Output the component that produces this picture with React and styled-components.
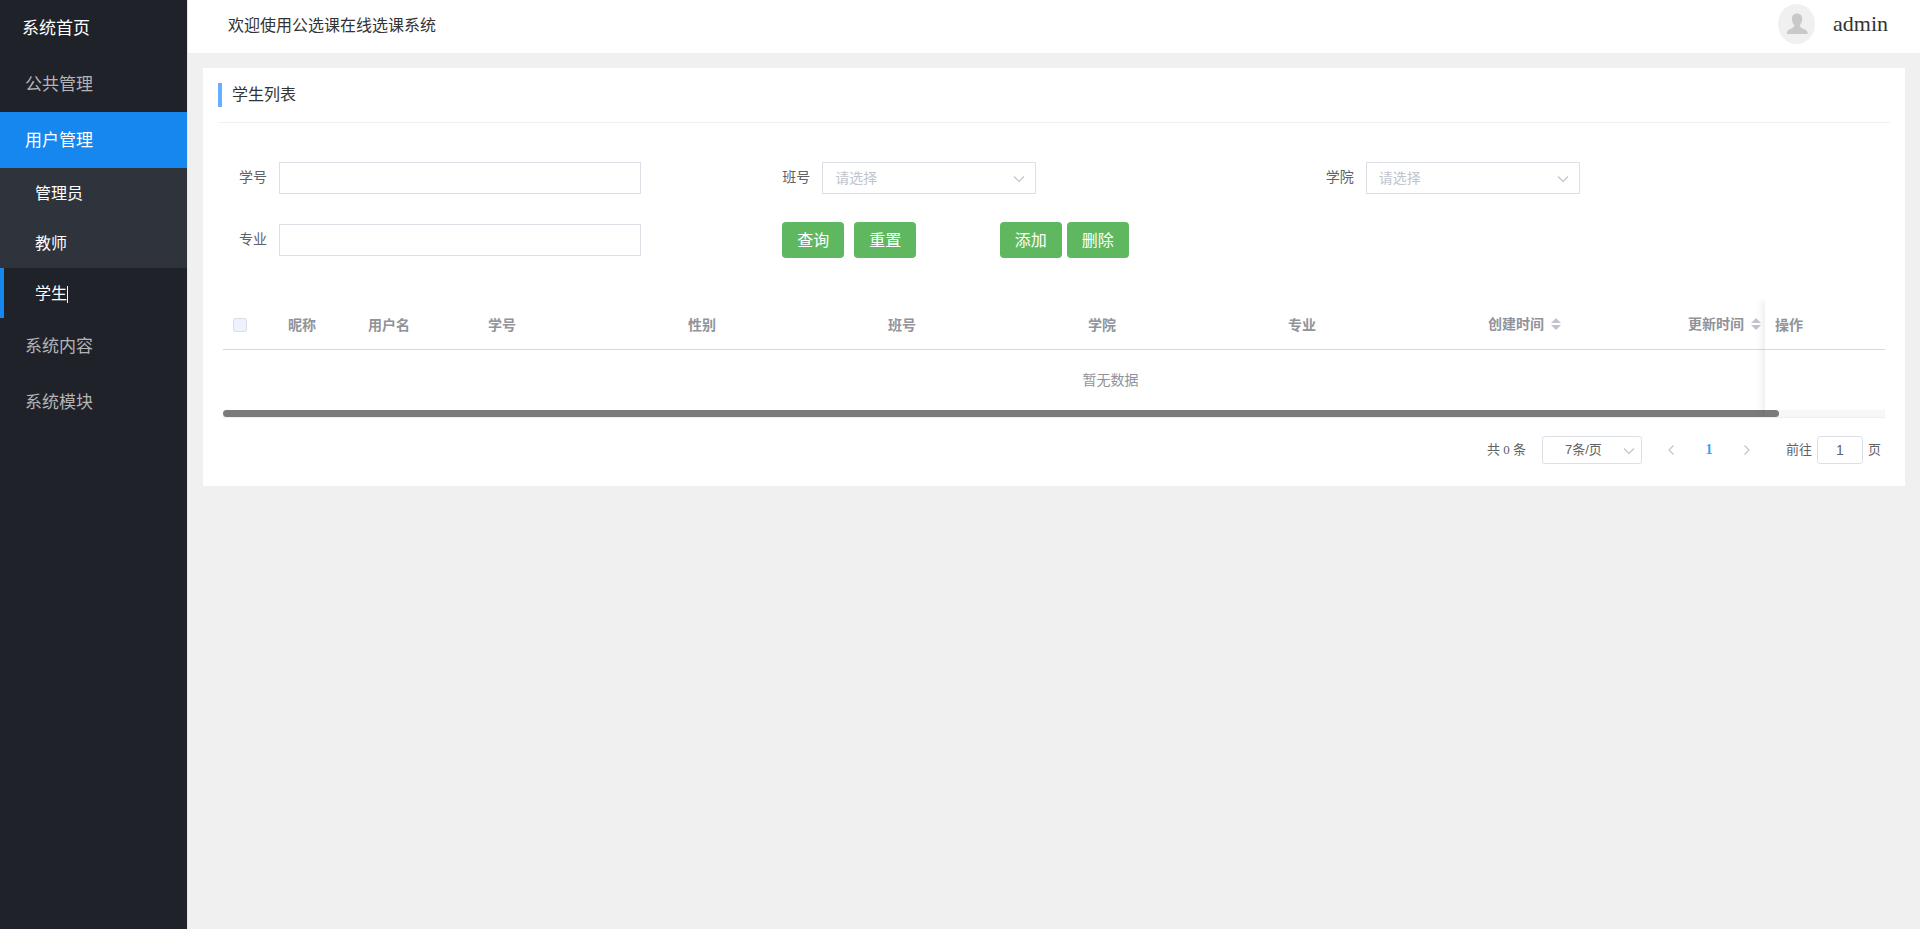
import React, { useState, useEffect, useRef } from 'react';
import styled, { createGlobalStyle, css } from 'styled-components';

const serif = '"Liberation Serif", "Noto Sans CJK SC", serif';
const sans = '"Liberation Sans", "Noto Sans CJK SC", sans-serif';

const GlobalStyle = createGlobalStyle`
  * {
    box-sizing: border-box;
  }
  body {
    margin: 0;
    background: #f0f0f0;
    color: #333;
    font-family: ${serif};
  }
  button, input, select {
    margin: 0;
    font-family: ${sans};
  }
`;

const Layout = styled.div`
  display: flex;
  min-height: 100vh;
`;

// Sidebar
const Sidebar = styled.nav`
  flex: 0 0 188px;
  background: #20222a;
  border-right: 1px solid #e6e6e6;
`;

const MenuLink = styled.a`
  display: flex;
  align-items: center;
  height: 56px;
  padding: 2px 25px 0;
  font-size: 17px;
  line-height: 24px;
  text-decoration: none;
  color: #b3b4b6;

  ${({ $home }) => $home && css`
    padding: 2px 22px 0;
    color: #fff;
  `}

  ${({ $open }) => $open && css`
    background: #1687ef;
    color: #fff;
  `}
`;

const SubMenu = styled.div`
  background: #2f333c;
`;

const SubLink = styled.a`
  display: flex;
  align-items: center;
  height: 50px;
  padding: 2px 31px 0;
  border-left: 4px solid transparent;
  font-size: 16px;
  line-height: 24px;
  text-decoration: none;
  color: #fff;

  ${({ $active }) => $active && css`
    background: #20222a;
    border-left-color: #1687ef;
  `}
`;

const Caret = styled.span`
  width: 1px;
  height: 17px;
  background: #fff;
`;

// Right side
const Main = styled.div`
  flex: 1;
  min-width: 0;
`;

const Header = styled.header`
  display: flex;
  align-items: center;
  justify-content: space-between;
  height: 53px;
  padding: 0 32px 5px 40px;
  background: #fff;
  font-size: 16px;
`;

const User = styled.div`
  display: flex;
  align-items: center;
  gap: 18px;
  font-size: 22px;
`;

const Card = styled.section`
  margin: 15px;
  padding: 15px 15px 22px;
  background: #fff;
`;

const CardTitle = styled.h1`
  display: flex;
  align-items: center;
  margin: 0;
  padding-bottom: 15px;
  border-bottom: 1px solid #f0f0f0;
  font-size: 16px;
  font-weight: normal;
  line-height: 24px;

  &::before {
    content: '';
    width: 4px;
    height: 24px;
    margin-right: 10px;
    background: #66b1ff;
  }
`;

const Form = styled.form`
  display: grid;
  grid-template-columns: repeat(3, 1fr);
  row-gap: 26px;
  padding: 37px 21px 41px;
`;

const Field = styled.div`
  display: flex;
  align-items: center;
  height: 36px;
`;

const Label = styled.label`
  flex: 0 0 40px;
  font-size: 14px;
  line-height: 20px;
  color: #606266;
`;

const TextInput = styled.input`
  width: 66.6%;
  height: 32px;
  padding: 0 14px;
  border: 1px solid #dcdfe6;
  font-size: 14px;
  color: #606266;
  outline: none;
`;

const SelectBox = styled.span`
  position: relative;
  display: inline-flex;
  width: ${({ $small }) => ($small ? '100px' : '214px')};
  height: ${({ $small }) => ($small ? '28px' : '32px')};

  svg {
    position: absolute;
    top: 50%;
    right: ${({ $small }) => ($small ? '7px' : '11px')};
    margin-top: -5px;
    pointer-events: none;
  }
`;

const Select = styled.select`
  width: 100%;
  padding: ${({ $small }) => ($small ? '0 22px 2px' : '0 12px')};
  appearance: none;
  border: 1px solid #dcdfe6;
  border-radius: ${({ $small }) => ($small ? '3px' : '0')};
  background: #fff;
  font-size: ${({ $small }) => ($small ? '13px' : '14px')};
  color: ${({ $small }) => ($small ? '#606266' : '#c0c4cc')};
  outline: none;
`;

const QueryButtons = styled.div`
  display: flex;
  gap: 10px;
  width: 40%;
`;

const EditButtons = styled.div`
  display: flex;
  gap: 5px;
`;

const Button = styled.button`
  width: 62px;
  height: 36px;
  padding: 0 0 2px;
  border: 0;
  border-radius: 4px;
  background: #5fb85f;
  font-size: 16px;
  color: #fff;
  cursor: pointer;
`;

// Table
const TableBox = styled.div`
  position: relative;
  margin: 0 5px;
  overflow: hidden;
  border-bottom: 1px solid #ebeef5;
`;

const TableScroll = styled.div`
  overflow-x: auto;
  scrollbar-width: none;
`;

const Table = styled.table`
  width: 1775px;
  table-layout: fixed;
  border-collapse: separate;
  border-spacing: 0;
  font-family: ${sans};
  font-size: 14px;
  color: #909399;
`;

const Th = styled.th`
  width: ${({ $width }) => $width}px;
  height: 51px;
  padding: ${({ $sortable }) => ($sortable ? '0 10px' : '2px 10px 0')};
  border-bottom: 1px solid #d9d9d9;
  background: #fff;
  text-align: left;
  line-height: 23px;
  white-space: nowrap;

  &:last-child {
    position: sticky;
    right: 0;
  }
`;

const Sortable = styled.span`
  display: flex;
  align-items: center;
  gap: 7px;
`;

const Checkbox = styled.input`
  display: block;
  width: 14px;
  height: 14px;
  margin: 0;
  appearance: none;
  border: 1px solid #dcdfe6;
  border-radius: 2px;
  background: #edf2fc;
`;

const EmptyCell = styled.td`
  height: 60px;
  padding: 0 0 2px;
  text-align: center;
`;

const FixedShadow = styled.div`
  position: absolute;
  top: 0;
  right: 0;
  bottom: 0;
  width: 120px;
  box-shadow: 0 0 10px rgba(0, 0, 0, 0.12);
  pointer-events: none;
`;

const Track = styled.div`
  height: 7px;
  background: #f7f7f7;
`;

const Thumb = styled.div`
  height: 7px;
  border-radius: 4px;
  background: #7b7b7b;
`;

// Pagination
const Pagination = styled.div`
  display: flex;
  align-items: center;
  justify-content: flex-end;
  padding: 18px 9px 0 0;
  font-size: 13px;
  line-height: 18px;
  color: #606266;
`;

const Total = styled.span`
  margin-right: 16px;
`;

const Pager = styled.div`
  display: flex;
  gap: 10px;
  margin: 0 25px 0 15px;
`;

const PageButton = styled.button`
  display: flex;
  align-items: center;
  justify-content: center;
  width: 28px;
  height: 28px;
  padding: 0 0 1px;
  border: 0;
  background: #fff;
  font-family: ${serif};
  font-size: 14px;
  font-weight: bold;
  color: #409eff;
`;

const Jumper = styled.label`
  display: flex;
  align-items: center;
  gap: 5px;
`;

const JumpInput = styled.input`
  width: 46px;
  height: 28px;
  padding: 0 3px;
  border: 1px solid #dcdfe6;
  border-radius: 3px;
  font-size: 14px;
  text-align: center;
  color: #606266;
  outline: none;
`;

const Arrow = ({ d }) => (
  <svg width="12" height="12" viewBox="0 0 12 12" fill="none" stroke="#c0c4cc" strokeWidth="1.2">
    <path d={d} />
  </svg>
);

const DOWN = 'M1 3.5 6 8.5 11 3.5';
const LEFT = 'M8.5 1.5 4 6 8.5 10.5';
const RIGHT = 'M3.5 1.5 8 6 3.5 10.5';

const SortIcon = () => (
  <svg width="10" height="12" viewBox="0 0 10 12" fill="#c0c4cc">
    <path d="M0 5 5 0 10 5zM0 7 5 12 10 7z" />
  </svg>
);

const Avatar = () => (
  <svg width="37" height="40" viewBox="0 0 37 40">
    <ellipse cx="18.5" cy="20" rx="18.5" ry="20" fill="#f0f0f0" />
    <path
      fill="#c9c9c9"
      d="M19 9.500c3.300 0 5.200 2.300 5.200 5.500 0 2.600-1 4.700-2.400 6 .2 2.500 2.400 3.300 4.700 4.200 2.200.9 3.200 2 3.200 4.800H8.700c0-2.800 1-3.900 3.200-4.800 2.300-.9 4.300-1.700 4.500-4.200-1.500-1.300-2.500-3.400-2.500-6 0-3.200 1.800-5.500 5.100-5.500z"
    />
  </svg>
);

const columns = [
  { label: '昵称', width: 80 },
  { label: '用户名', width: 120 },
  { label: '学号', width: 200 },
  { label: '性别', width: 200 },
  { label: '班号', width: 200 },
  { label: '学院', width: 200 },
  { label: '专业', width: 200 },
  { label: '创建时间', width: 200, sortable: true },
  { label: '更新时间', width: 200, sortable: true },
  { label: '操作', width: 120 },
];

const StudentTable = () => {
  const scrollRef = useRef(null);
  const [bar, setBar] = useState({ width: 100, left: 0 });

  const updateBar = () => {
    const el = scrollRef.current;
    setBar({
      width: (el.clientWidth / el.scrollWidth) * 100,
      left: (el.scrollLeft / el.scrollWidth) * 100,
    });
  };

  useEffect(() => {
    updateBar();
    window.addEventListener('resize', updateBar);
    return () => window.removeEventListener('resize', updateBar);
  }, []);

  return (
    <TableBox>
      <TableScroll ref={scrollRef} onScroll={updateBar}>
        <Table>
          <thead>
            <tr>
              <Th $width={55}>
                <Checkbox type="checkbox" aria-label="全选" />
              </Th>
              {columns.map((col) => (
                <Th key={col.label} $width={col.width} $sortable={col.sortable}>
                  {col.sortable ? (
                    <Sortable>
                      {col.label}
                      <SortIcon />
                    </Sortable>
                  ) : (
                    col.label
                  )}
                </Th>
              ))}
            </tr>
          </thead>
          <tbody>
            <tr>
              <EmptyCell colSpan={columns.length + 1}>暂无数据</EmptyCell>
            </tr>
          </tbody>
        </Table>
      </TableScroll>
      <Track>
        <Thumb style={{ width: `${bar.width}%`, marginLeft: `${bar.left}%` }} />
      </Track>
      <FixedShadow />
    </TableBox>
  );
};

const App = () => {
  const [page, setPage] = useState('1');

  return (
    <>
      <GlobalStyle />
      <Layout>
        <Sidebar>
          <MenuLink href="#home" $home>系统首页</MenuLink>
          <MenuLink href="#public">公共管理</MenuLink>
          <MenuLink href="#users" $open>用户管理</MenuLink>
          <SubMenu>
            <SubLink href="#admins">管理员</SubLink>
            <SubLink href="#teachers">教师</SubLink>
            <SubLink href="#students" $active>
              学生
              <Caret />
            </SubLink>
          </SubMenu>
          <MenuLink href="#content">系统内容</MenuLink>
          <MenuLink href="#modules">系统模块</MenuLink>
        </Sidebar>
        <Main>
          <Header>
            <span>欢迎使用公选课在线选课系统</span>
            <User>
              <Avatar />
              <span>admin</span>
            </User>
          </Header>
          <Card>
            <CardTitle>学生列表</CardTitle>
            <Form onSubmit={(e) => e.preventDefault()}>
              <Field>
                <Label htmlFor="number">学号</Label>
                <TextInput id="number" type="text" />
              </Field>
              <Field>
                <Label htmlFor="class">班号</Label>
                <SelectBox>
                  <Select id="class">
                    <option>请选择</option>
                  </Select>
                  <Arrow d={DOWN} />
                </SelectBox>
              </Field>
              <Field>
                <Label htmlFor="college">学院</Label>
                <SelectBox>
                  <Select id="college">
                    <option>请选择</option>
                  </Select>
                  <Arrow d={DOWN} />
                </SelectBox>
              </Field>
              <Field>
                <Label htmlFor="major">专业</Label>
                <TextInput id="major" type="text" />
              </Field>
              <Field>
                <QueryButtons>
                  <Button type="submit">查询</Button>
                  <Button type="reset">重置</Button>
                </QueryButtons>
                <EditButtons>
                  <Button type="button">添加</Button>
                  <Button type="button">删除</Button>
                </EditButtons>
              </Field>
            </Form>
            <StudentTable />
            <Pagination>
              <Total>共 0 条</Total>
              <SelectBox $small>
                <Select $small aria-label="每页条数">
                  <option>7条/页</option>
                </Select>
                <Arrow d={DOWN} />
              </SelectBox>
              <Pager>
                <PageButton type="button" aria-label="上一页" disabled>
                  <Arrow d={LEFT} />
                </PageButton>
                <PageButton type="button">1</PageButton>
                <PageButton type="button" aria-label="下一页" disabled>
                  <Arrow d={RIGHT} />
                </PageButton>
              </Pager>
              <Jumper>
                前往
                <JumpInput value={page} onChange={(e) => setPage(e.target.value)} />
                页
              </Jumper>
            </Pagination>
          </Card>
        </Main>
      </Layout>
    </>
  );
};

export default App;
